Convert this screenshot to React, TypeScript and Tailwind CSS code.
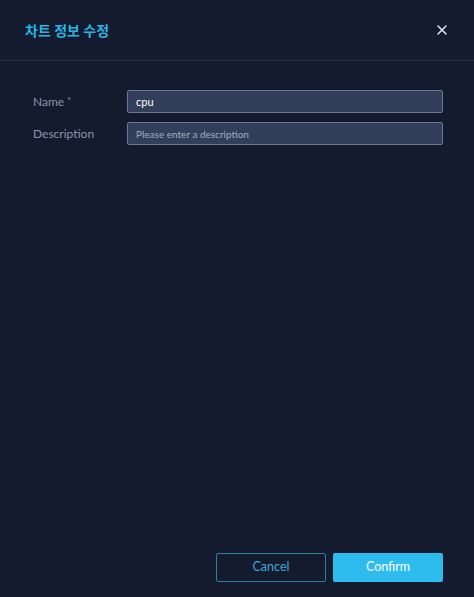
import { X } from 'lucide-react';

export default function App() {
  return (
    <div
      className="flex h-[597px] w-[474px] flex-col bg-[#141b2e] text-[#8b95ad]"
      style={{ fontFamily: 'Lato, "Noto Sans CJK KR", sans-serif' }}
    >
      <header className="flex h-[61px] items-center justify-between border-b border-[#283148] pl-[25px] pr-[24px]">
        <h1 className="text-[14px] font-bold text-[#2ab4e6]">차트 정보 수정</h1>
        <button type="button" aria-label="Close" className="text-[#e4e8f0]">
          <X size={16} strokeWidth={2.2} />
        </button>
      </header>

      <form className="flex flex-1 flex-col gap-[9px] pl-[33px] pr-[31px] pt-[29px]">
        <div className="flex items-center">
          <label className="w-[94px] text-[12px]">
            Name <span className="relative -top-[2px] text-[9px]">*</span>
          </label>
          <input
            defaultValue="cpu"
            className="h-[23px] flex-1 rounded-[2px] border border-[#6b7893] bg-[#333f5a] px-[8px] text-[11px] text-white outline-none"
          />
        </div>
        <div className="flex items-center">
          <label className="w-[94px] text-[12px]">Description</label>
          <input
            placeholder="Please enter a description"
            className="h-[23px] flex-1 rounded-[2px] border border-[#6b7893] bg-[#333f5a] px-[8px] text-[10px] text-white outline-none placeholder:text-[#a3acc0]"
          />
        </div>
      </form>

      <footer className="flex justify-end gap-[7px] pb-[15px] pr-[31px]">
        <button
          type="button"
          className="h-[29px] w-[110px] rounded-[2px] border border-[#2a7fa6] text-[12.5px] text-[#3aa6d6]"
        >
          Cancel
        </button>
        <button
          type="button"
          className="h-[29px] w-[110px] rounded-[2px] bg-[#2cbcee] text-[12.5px] text-white"
        >
          Confirm
        </button>
      </footer>
    </div>
  );
}
